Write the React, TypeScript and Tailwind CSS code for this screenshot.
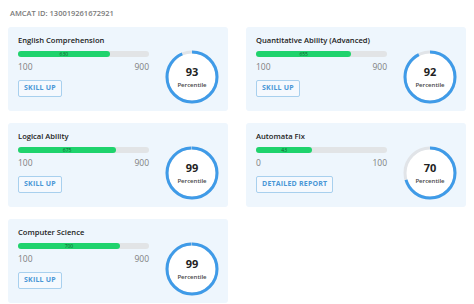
import React from 'react';

type Score = {
  title: string;
  score: number;
  min: number;
  max: number;
  percentile: number;
  action: string;
};

const scores: Score[] = [
  { title: 'English Comprehension', score: 630, min: 100, max: 900, percentile: 93, action: 'SKILL UP' },
  { title: 'Quantitative Ability (Advanced)', score: 655, min: 100, max: 900, percentile: 92, action: 'SKILL UP' },
  { title: 'Logical Ability', score: 675, min: 100, max: 900, percentile: 99, action: 'SKILL UP' },
  { title: 'Automata Fix', score: 43, min: 0, max: 100, percentile: 70, action: 'DETAILED REPORT' },
  { title: 'Computer Science', score: 700, min: 100, max: 900, percentile: 99, action: 'SKILL UP' },
];

function PercentileRing({ value }: { value: number }) {
  const r = 25;
  const c = 2 * Math.PI * r;
  return (
    <div className="relative w-[54px] h-[54px]">
      <svg width="54" height="54" viewBox="0 0 54 54" className="absolute inset-0">
        <circle cx="27" cy="27" r={r} fill="#ffffff" stroke="#e1e4e8" strokeWidth="3" />
        <circle
          cx="27"
          cy="27"
          r={r}
          fill="none"
          stroke="#3f9be8"
          strokeWidth="3"
          strokeDasharray={`${(c * value) / 100} ${c}`}
          transform="rotate(-90 27 27)"
        />
      </svg>
      <div className="absolute inset-0 flex flex-col items-center justify-center">
        <span className="text-[11px] leading-[13px] font-bold text-[#222]">{value}</span>
        <span className="text-[6px] leading-[8px] font-semibold text-[#444] mt-[3px]">Percentile</span>
      </div>
    </div>
  );
}

function ScoreCard({ s }: { s: Score }) {
  // bar is drawn against the max score, not the range
  const pct = (s.score / s.max) * 100;
  return (
    <div className="h-[84px] bg-[#eef6fd] rounded-[3px] flex justify-between pl-[10px] pr-[9px]">
      <div className="w-[131px] pt-[8px]">
        <div className="text-[7.6px] leading-[10px] font-semibold text-[#222] whitespace-nowrap">{s.title}</div>
        <div className="mt-[6px] h-[6px] w-[131px] rounded-full bg-[#e2e4e6]">
          <div
            className="h-full rounded-full bg-[#1fd36d] flex items-center justify-center"
            style={{ width: `${pct}%` }}
          >
            <span className="text-[5px] leading-[6px] text-[#14602f]">{s.score}</span>
          </div>
        </div>
        <div className="mt-[5px] flex justify-between text-[8.5px] leading-[10px] text-[#808080]">
          <span>{s.min}</span>
          <span>{s.max}</span>
        </div>
        <button className="mt-[5px] h-[17px] px-[5px] border border-[#a8d0ee] rounded-[2px] bg-white/40 text-[7px] font-bold text-[#4a97d6] tracking-[0.2px]">
          {s.action}
        </button>
      </div>
      <div className="pt-[23px]">
        <PercentileRing value={s.percentile} />
      </div>
    </div>
  );
}

export default function App() {
  return (
    <div
      className="w-[474px] h-[304px] bg-white overflow-hidden px-[8px]"
      style={{ fontFamily: '"Open Sans", "Noto Sans", sans-serif' }}
    >
      <div className="pt-[8px] pl-[2px] h-[27px] text-[7.5px] leading-[10px] font-semibold text-[#7a7a7a]">
        AMCAT ID: 130019261672921
      </div>
      <div className="grid grid-cols-2 gap-x-[18px] gap-y-[12px]">
        {scores.map((s) => (
          <ScoreCard key={s.title} s={s} />
        ))}
      </div>
    </div>
  );
}
